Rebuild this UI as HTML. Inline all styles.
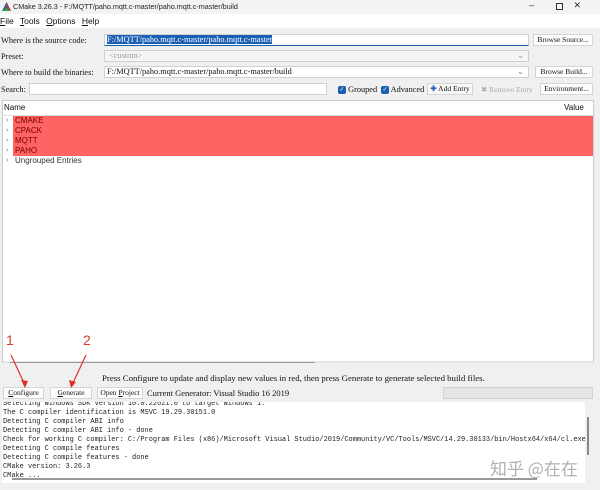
<!DOCTYPE html>
<html><head><meta charset="utf-8"><style>
*{margin:0;padding:0;box-sizing:border-box}
body{width:600px;height:490px;background:#f0f0f0;position:relative;overflow:hidden;font-family:"Liberation Serif",serif;font-size:8.3px;color:#111}
.a{position:absolute;white-space:nowrap}
.sans{font-family:"Liberation Sans",sans-serif}
.inp{background:#fff;border:1px solid #d0d0d0;height:12px;line-height:10px;padding-left:2px;white-space:nowrap;overflow:hidden}
.btn{background:#fdfdfd;border:1px solid #d5d5d5;height:12px;line-height:10px;text-align:center;white-space:nowrap;font-size:7.5px}
.row{position:absolute;left:0;font-family:"Liberation Sans",sans-serif;font-size:8px;height:10px;line-height:10px}
.chev{position:absolute;left:4px;color:#777;font-size:7px}
.log{font-family:"Liberation Mono",monospace;font-size:6.95px;line-height:9px;white-space:pre;color:#222}
.cb{display:inline-block;width:8px;height:8px;background:#1a5fb4;border-radius:2px;vertical-align:middle;color:#fff;font-size:6px;line-height:8px;text-align:center}
</style></head><body>
<div class="a" style="left:0;top:0;width:600px;height:14px;background:#f3f3f3"></div>
<div class="a sans" style="left:2px;top:2px;width:9px;height:9px"><svg width="9" height="9"><polygon points="4.5,0 9,9 0,9" fill="#1a6fb0"/><polygon points="4.5,0 9,9 4.5,6" fill="#c8302c"/><polygon points="0,9 4.5,6 9,9" fill="#3a9a3a"/></svg></div>
<div class="a sans" style="left:13px;top:2px;font-size:7.2px;color:#222">CMake 3.26.3 - F:/MQTT/paho.mqtt.c-master/paho.mqtt.c-master/build</div>
<div class="a sans" style="left:529px;top:0;font-size:9px;color:#333">–</div>
<div class="a" style="left:556px;top:3px;width:7px;height:7px;border:1px solid #333"></div>
<div class="a sans" style="left:281px;top:0;width:300px;font-size:9px;color:#333;text-align:right">✕</div>
<div class="a" style="left:0;top:14px;width:600px;height:14px;background:#fff"></div>
<div class="a sans" style="left:0;top:16px;font-size:8.5px;word-spacing:4px"><u>F</u>ile <u>T</u>ools <u>O</u>ptions <u>H</u>elp</div>
<div class="a" style="left:1px;top:36px">Where is the source code:</div>
<div class="a inp" style="left:104px;top:34px;width:425px;border-bottom:1px solid #1a5fb4"><span style="background:#1a5fb4;color:#fff">F:/MQTT/paho.mqtt.c-master/paho.mqtt.c-master</span></div>
<div class="a btn" style="left:533px;top:34px;width:60px">Browse Source...</div>
<div class="a" style="left:1px;top:52px">Preset:</div>
<div class="a inp" style="left:104px;top:50px;width:425px;background:#f5f5f5;color:#999">&nbsp;&lt;custom&gt;<span style="float:right;padding-right:4px">⌄</span></div>
<div class="a" style="left:1px;top:68px">Where to build the binaries:</div>
<div class="a inp" style="left:104px;top:66px;width:425px">F:/MQTT/paho.mqtt.c-master/paho.mqtt.c-master/build<span style="float:right;padding-right:4px;color:#888">⌄</span></div>
<div class="a btn" style="left:535px;top:66px;width:58px">Browse Build...</div>
<div class="a" style="left:1px;top:85px">Search:</div>
<div class="a inp" style="left:29px;top:83px;width:298px"></div>
<div class="a" style="left:338px;top:85px"><span class="cb">✓</span> Grouped</div>
<div class="a" style="left:381px;top:85px"><span class="cb">✓</span> Advanced</div>
<div class="a btn" style="left:427px;top:83px;width:46px;background:#f8f8f8"><span style="color:#2a5dc0;font-weight:bold">✚</span> Add Entry</div>
<div class="a" style="left:481px;top:85px;color:#aaa;font-size:7.5px">✖ Remove Entry</div>
<div class="a btn" style="left:540px;top:83px;width:53px">Environment...</div>
<div class="a" style="left:2px;top:100px;width:592px;height:263px;background:#fff;border:1px solid #ccc"></div>
<div class="a sans" style="left:4px;top:103px;font-size:8px">Name</div>
<div class="a sans" style="left:564px;top:103px;font-size:8px">Value</div>
<div class="a" style="left:3px;top:115px;width:590px;height:1px;background:#e0e0e0"></div>
<div class="a" style="left:13px;top:116px;width:580px;height:40px;background:#fe6464"></div>
<div class="a" style="left:2px;top:116px;width:591px">
<div class="row" style="top:0"><span class="chev">›</span><span style="margin-left:13px;color:#7a0000">CMAKE</span></div>
<div class="row" style="top:10px"><span class="chev">›</span><span style="margin-left:13px;color:#7a0000">CPACK</span></div>
<div class="row" style="top:20px"><span class="chev">›</span><span style="margin-left:13px;color:#7a0000">MQTT</span></div>
<div class="row" style="top:30px"><span class="chev">›</span><span style="margin-left:13px;color:#7a0000">PAHO</span></div>
<div class="row" style="top:40px"><span class="chev">›</span><span style="margin-left:13px;color:#333">Ungrouped Entries</span></div>
</div>
<div class="a" style="left:3px;top:361px;width:590px;height:2px;background:#e6e6e6"></div>
<div class="a" style="left:10px;top:362px;width:305px;height:1px;background:#999"></div>
<div class="a" style="left:102px;top:373px;font-size:8.8px">Press Configure to update and display new values in red, then press Generate to generate selected build files.</div>
<div class="a btn" style="left:3px;top:387px;width:41px"><u>C</u>onfigure</div>
<div class="a btn" style="left:50px;top:387px;width:42px"><u>G</u>enerate</div>
<div class="a btn" style="left:97px;top:387px;width:46px">Open <u>P</u>roject</div>
<div class="a" style="left:147px;top:388px;font-size:8.5px">Current Generator: Visual Studio 16 2019</div>
<div class="a" style="left:443px;top:387px;width:150px;height:12px;background:#e6e6e6;border:1px solid #d0d0d0"></div>
<div class="a" style="left:2px;top:402px;width:583px;height:81px;background:#fff;overflow:hidden">
<div class="log" style="margin:-2px 0 0 1px">Selecting Windows SDK version 10.0.22621.0 to target Windows 1.
The C compiler identification is MSVC 19.29.30151.0
Detecting C compiler ABI info
Detecting C compiler ABI info - done
Check for working C compiler: C:/Program Files (x86)/Microsoft Visual Studio/2019/Community/VC/Tools/MSVC/14.29.30133/bin/Hostx64/x64/cl.exe
Detecting C compile features
Detecting C compile features - done
CMake version: 3.26.3
CMake ...</div>
</div>
<div class="a" style="left:587px;top:417px;width:2px;height:38px;background:#888"></div>
<div class="a" style="left:12px;top:478px;width:525px;height:2px;background:#999"></div>
<div class="a" style="left:490px;top:455px;font-family:'Noto Sans CJK SC',sans-serif;font-size:17px;color:rgba(150,150,150,0.75)">知乎 @在在</div>
<svg class="a" style="left:0;top:330px" width="120" height="60"><g fill="none" stroke="#e0302a" stroke-width="1.2"><text x="6" y="15" fill="#d83a2a" stroke="none" font-family="Liberation Sans" font-size="14">1</text><text x="83" y="15" fill="#d83a2a" stroke="none" font-family="Liberation Sans" font-size="14">2</text><line x1="11" y1="25" x2="25" y2="55"/><line x1="86" y1="25" x2="72" y2="55"/></g><polygon points="25,58 21,50 28,51" fill="#e0302a"/><polygon points="71,58 69,50 76,52" fill="#e0302a"/></svg>
</body></html>
